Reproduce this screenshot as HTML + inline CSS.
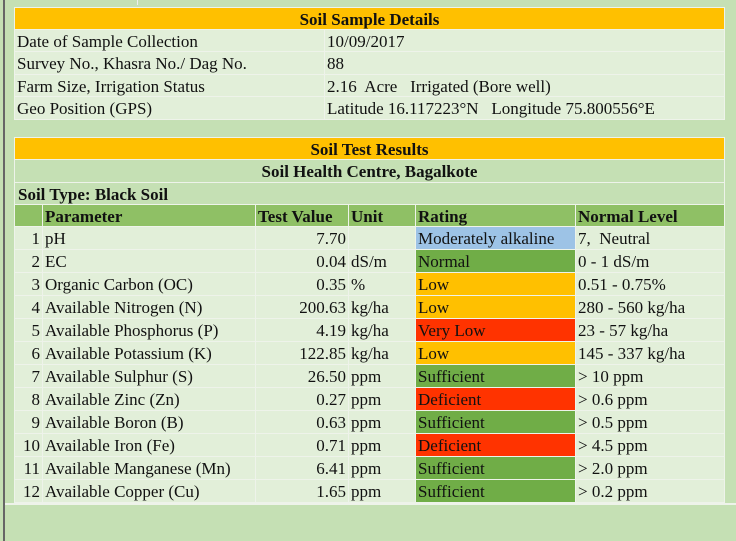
<!DOCTYPE html>
<html><head><meta charset="utf-8"><style>
body{margin:0;width:736px;height:541px;background:#c5e0b4;position:relative;overflow:hidden;font-family:"Liberation Serif",serif;font-size:17px;color:#111}
.lb{position:absolute;left:3px;top:0;width:2px;height:541px;background:#666}
.tl{position:absolute;left:137px;top:0;width:1px;height:5px;background:#eee}
table{position:absolute;left:14px;border-collapse:collapse;table-layout:fixed;width:711px}
td{padding:1px 2px 0 2px;white-space:nowrap;overflow:hidden;border:1px solid #eef3ea;line-height:19px}
.y{background:#ffc000;font-weight:bold;text-align:center}
.l{background:#e2efd9}
.g{background:#c5e0b4}
.h{background:#8fc065;font-weight:bold}
.r{text-align:right}
.bl{background:#9dc3e6}.gr{background:#70ad47}.ye{background:#ffc000}.rd{background:#ff3300}
</style></head><body>
<div class="lb"></div><div class="tl"></div>
<table style="top:7px">
<colgroup><col style="width:310px"><col></colgroup>
<tr style="height:22px"><td class="y" colspan="2">Soil Sample Details</td></tr>
<tr style="height:22px" class="l"><td>Date of Sample Collection</td><td>10/09/2017</td></tr>
<tr style="height:23px" class="l"><td>Survey No., Khasra No./ Dag No.</td><td>88</td></tr>
<tr style="height:22px" class="l"><td>Farm Size, Irrigation Status</td><td>2.16&nbsp; Acre&nbsp;&nbsp; Irrigated (Bore well)</td></tr>
<tr style="height:23px" class="l"><td>Geo Position (GPS)</td><td>Latitude 16.117223°N&nbsp;&nbsp; Longitude 75.800556°E</td></tr>
</table>
<table style="top:137px">
<colgroup><col style="width:28px"><col style="width:213px"><col style="width:93px"><col style="width:67px"><col style="width:160px"><col></colgroup>
<tr style="height:22px"><td class="y" colspan="6">Soil Test Results</td></tr>
<tr style="height:23px"><td class="g" colspan="6" style="text-align:center;font-weight:bold">Soil Health Centre, Bagalkote</td></tr>
<tr style="height:22px"><td class="g" colspan="6" style="font-weight:bold;padding-left:3px">Soil Type: Black Soil</td></tr>
<tr style="height:22px" class="h"><td></td><td>Parameter</td><td>Test Value</td><td>Unit</td><td>Rating</td><td>Normal Level</td></tr>
<tr style="height:23px" class="l"><td class="r">1</td><td>pH</td><td class="r">7.70</td><td></td><td class="bl">Moderately alkaline</td><td>7,&nbsp; Neutral</td></tr>
<tr style="height:23px" class="l"><td class="r">2</td><td>EC</td><td class="r">0.04</td><td>dS/m</td><td class="gr">Normal</td><td>0 - 1 dS/m</td></tr>
<tr style="height:23px" class="l"><td class="r">3</td><td>Organic Carbon (OC)</td><td class="r">0.35</td><td>%</td><td class="ye">Low</td><td>0.51 - 0.75%</td></tr>
<tr style="height:23px" class="l"><td class="r">4</td><td>Available Nitrogen (N)</td><td class="r">200.63</td><td>kg/ha</td><td class="ye">Low</td><td>280 - 560 kg/ha</td></tr>
<tr style="height:23px" class="l"><td class="r">5</td><td>Available Phosphorus (P)</td><td class="r">4.19</td><td>kg/ha</td><td class="rd">Very Low</td><td>23 - 57 kg/ha</td></tr>
<tr style="height:23px" class="l"><td class="r">6</td><td>Available Potassium (K)</td><td class="r">122.85</td><td>kg/ha</td><td class="ye">Low</td><td>145 - 337 kg/ha</td></tr>
<tr style="height:23px" class="l"><td class="r">7</td><td>Available Sulphur (S)</td><td class="r">26.50</td><td>ppm</td><td class="gr">Sufficient</td><td>&gt; 10 ppm</td></tr>
<tr style="height:23px" class="l"><td class="r">8</td><td>Available Zinc (Zn)</td><td class="r">0.27</td><td>ppm</td><td class="rd">Deficient</td><td>&gt; 0.6 ppm</td></tr>
<tr style="height:23px" class="l"><td class="r">9</td><td>Available Boron (B)</td><td class="r">0.63</td><td>ppm</td><td class="gr">Sufficient</td><td>&gt; 0.5 ppm</td></tr>
<tr style="height:23px" class="l"><td class="r">10</td><td>Available Iron (Fe)</td><td class="r">0.71</td><td>ppm</td><td class="rd">Deficient</td><td>&gt; 4.5 ppm</td></tr>
<tr style="height:23px" class="l"><td class="r">11</td><td>Available Manganese (Mn)</td><td class="r">6.41</td><td>ppm</td><td class="gr">Sufficient</td><td>&gt; 2.0 ppm</td></tr>
<tr style="height:23px" class="l"><td class="r">12</td><td>Available Copper (Cu)</td><td class="r">1.65</td><td>ppm</td><td class="gr">Sufficient</td><td>&gt; 0.2 ppm</td></tr>
</table>
<div style="position:absolute;left:5px;top:503px;width:731px;height:2px;background:#eef3ea"></div>
</body></html>
